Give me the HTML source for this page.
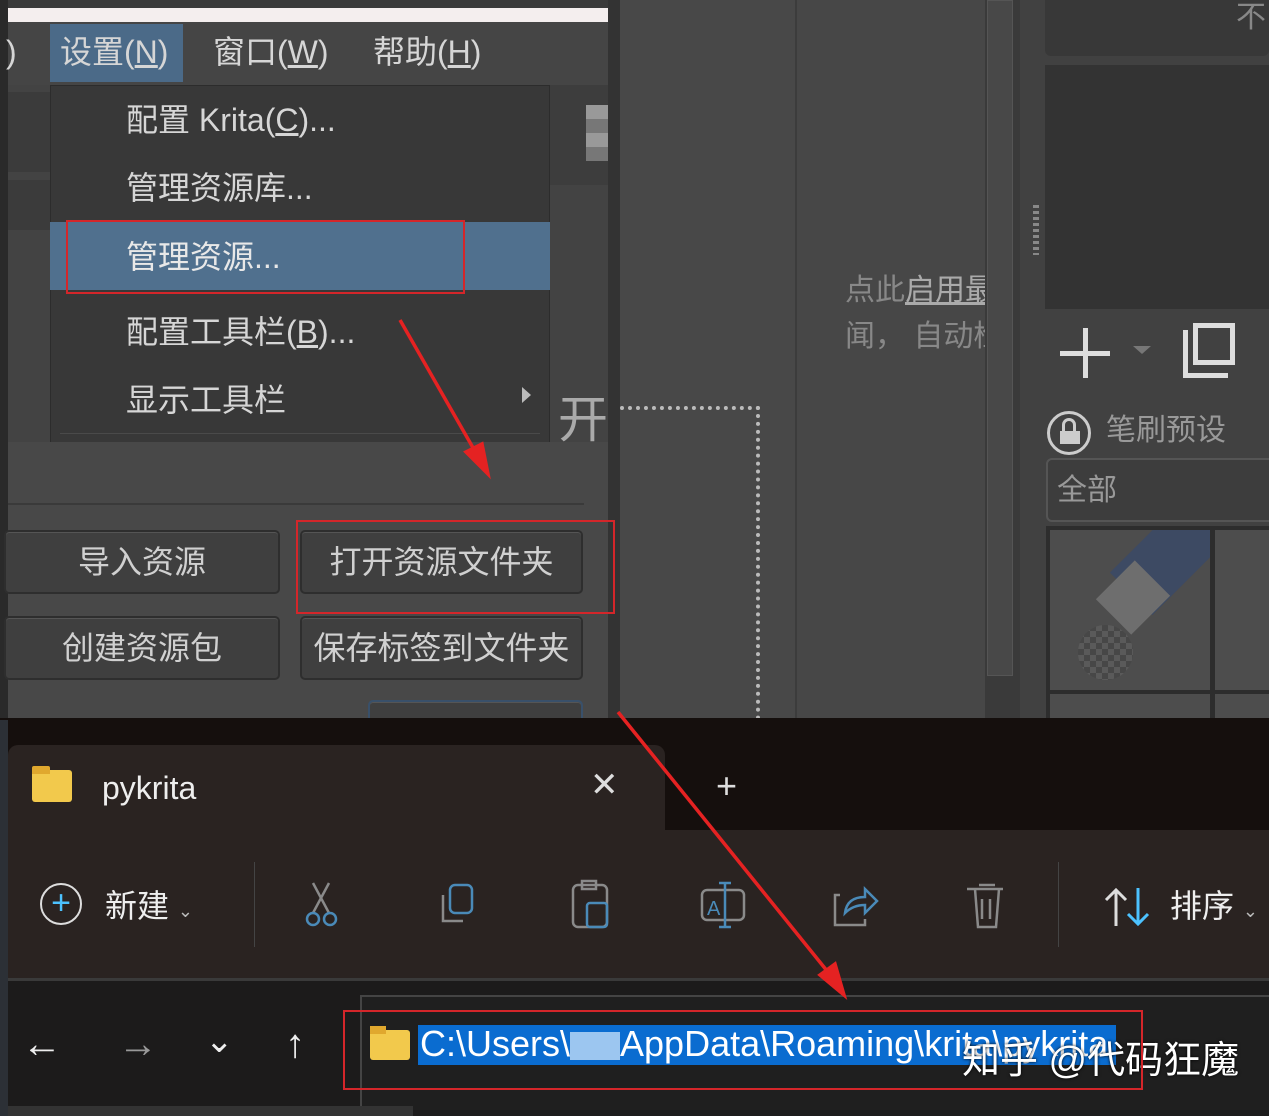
<!DOCTYPE html><html><head><meta charset="utf-8"><style>
*{margin:0;padding:0;box-sizing:border-box}
body{width:1269px;height:1116px;overflow:hidden;background:#2e2e2e;position:relative;font-family:"Liberation Sans","Noto Sans CJK SC",sans-serif}
.a{position:absolute}
.t{position:absolute;white-space:nowrap;color:#d6d6d6;font-size:32px;line-height:1}
.btn{position:absolute;background:#3f3f3f;border:2px solid #2e2e2e;border-radius:5px;color:#d0d0d0;font-size:32px;text-align:center;box-shadow:inset 0 1px 0 #555}
</style></head><body>
<div class="a" style="left:0;top:0;width:8px;height:720px;background:#2a2a2a"></div>
<div class="a" style="top:0;left:8px;width:600px;height:8px;background:#3a3a3a"></div>
<div class="a" style="left:8px;top:8px;width:600px;height:14px;background:#f4eeee"></div>
<div class="a" style="left:8px;top:22px;width:600px;height:63px;background:#454545"></div>
<div class="a" style="left:50px;top:24px;width:133px;height:58px;background:#4b6a88"></div>
<div class="t" style="left:6px;top:36px">)</div>
<div class="t" style="left:60px;top:36px">设置(<u>N</u>)</div>
<div class="t" style="left:213px;top:36px">窗口(<u>W</u>)</div>
<div class="t" style="left:373px;top:36px">帮助(<u>H</u>)</div>
<div class="a" style="left:8px;top:85px;width:600px;height:360px;background:#434343"></div>
<div class="a" style="left:8px;top:92px;width:42px;height:80px;background:#3b3b3b"></div>
<div class="a" style="left:8px;top:180px;width:42px;height:50px;background:#3b3b3b"></div>
<div class="a" style="left:550px;top:85px;width:58px;height:100px;background:#3d3d3d"></div>
<div class="a" style="left:586px;top:105px;width:22px;height:56px;background:repeating-linear-gradient(#999 0 14px,#777 14px 28px)"></div>
<div class="a" style="left:50px;top:85px;width:500px;height:358px;background:#383838;border:1px solid #2c2c2c"></div>
<div class="a" style="left:50px;top:222px;width:500px;height:68px;background:#50708e"></div>
<div class="t" style="left:126px;top:104px">配置 Krita(<u>C</u>)...</div>
<div class="t" style="left:126px;top:172px">管理资源库...</div>
<div class="t" style="left:126px;top:241px;color:#e8e8e8">管理资源...</div>
<div class="t" style="left:126px;top:316px">配置工具栏(<u>B</u>)...</div>
<div class="t" style="left:126px;top:384px">显示工具栏</div>
<div class="a" style="left:522px;top:387px;border-left:9px solid #bbb;border-top:8px solid transparent;border-bottom:8px solid transparent"></div>
<div class="a" style="left:60px;top:433px;width:480px;height:1px;background:#4a4a4a"></div>
<div class="t" style="left:558px;top:395px;font-size:50px;color:#aaa">开</div>
<div class="a" style="left:8px;top:442px;width:600px;height:278px;background:#484848"></div>
<div class="a" style="left:8px;top:503px;width:576px;height:2px;background:#3a3a3a"></div>
<div class="btn" style="left:4px;top:530px;width:276px;height:64px;line-height:60px">导入资源</div>
<div class="btn" style="left:300px;top:530px;width:283px;height:64px;line-height:60px">打开资源文件夹</div>
<div class="btn" style="left:4px;top:616px;width:276px;height:64px;line-height:60px">创建资源包</div>
<div class="btn" style="left:300px;top:616px;width:283px;height:64px;line-height:60px">保存标签到文件夹</div>
<div class="btn" style="left:368px;top:700px;width:215px;height:40px;border-color:#39506a"></div>
<div class="a" style="left:608px;top:0;width:12px;height:720px;background:#333"></div>
<div class="a" style="left:620px;top:0;width:175px;height:720px;background:#484848"></div>
<div class="a" style="left:795px;top:0;width:2px;height:720px;background:#3c3c3c"></div>
<div class="a" style="left:797px;top:0;width:188px;height:720px;background:#474747;overflow:hidden">
<div class="t" style="left:48px;top:276px;font-size:30px;color:#888">点此<u style="color:#aaa">启用最</u></div>
<div class="t" style="left:48px;top:322px;font-size:30px;color:#888">闻，&nbsp;自动检</div>
</div>
<div class="a" style="left:620px;top:406px;width:140px;height:314px;border-top:4px dotted #bbb;border-right:4px dotted #bbb"></div>
<div class="a" style="left:985px;top:0;width:35px;height:720px;background:#3a3a3a"></div>
<div class="a" style="left:987px;top:0;width:26px;height:676px;background:#484848;border:1px solid #555"></div>
<div class="a" style="left:1020px;top:0;width:249px;height:720px;background:#414141"></div>
<div class="a" style="left:1045px;top:0;width:224px;height:56px;background:#383838;border-radius:0 0 6px 6px"></div>
<div class="t" style="left:1236px;top:3px;font-size:30px;color:#888">不</div>
<div class="a" style="left:1045px;top:65px;width:224px;height:244px;background:#333"></div>
<div class="a" style="left:1033px;top:205px;width:6px;height:50px;background:repeating-linear-gradient(#888 0 3px,transparent 3px 6px)"></div>
<div class="a" style="left:1060px;top:351px;width:50px;height:5px;background:#ddd"></div>
<div class="a" style="left:1083px;top:328px;width:5px;height:50px;background:#ddd"></div>
<div class="a" style="left:1133px;top:346px;border-top:8px solid #777;border-left:9px solid transparent;border-right:9px solid transparent"></div>
<div class="a" style="left:1183px;top:330px;width:45px;height:48px;border-left:5px solid #ddd;border-bottom:5px solid #ddd"></div>
<div class="a" style="left:1193px;top:323px;width:42px;height:42px;border:5px solid #ddd"></div>
<div class="a" style="left:1047px;top:411px;width:44px;height:44px;border:3px solid #ccc;border-radius:50%"></div>
<div class="a" style="left:1060px;top:431px;width:20px;height:13px;background:#ccc"></div>
<div class="a" style="left:1062px;top:418px;width:14px;height:16px;border:3px solid #ccc;border-bottom:none;border-radius:7px 7px 0 0"></div>
<div class="t" style="left:1106px;top:416px;font-size:30px;color:#999">笔刷预设</div>
<div class="a" style="left:1046px;top:458px;width:230px;height:64px;background:#3d3d3d;border:2px solid #555;border-radius:6px"></div>
<div class="t" style="left:1057px;top:476px;font-size:30px;color:#999">全部</div>
<div class="a" style="left:1046px;top:526px;width:223px;height:194px;background:#2d2d2d"></div>
<div class="a" style="left:1050px;top:530px;width:160px;height:160px;background:#4d4d4d;overflow:hidden">
<div class="a" style="left:90px;top:-30px;width:60px;height:110px;background:#3d4a63;transform:rotate(45deg)"></div>
<div class="a" style="left:58px;top:40px;width:50px;height:55px;background:#6e6e6e;transform:rotate(45deg)"></div>
<div class="a" style="left:28px;top:95px;width:55px;height:55px;border-radius:50%;background:repeating-conic-gradient(#5a5a5a 0 25%,#474747 0 50%) 0 0/12px 12px"></div>
</div>
<div class="a" style="left:1215px;top:530px;width:54px;height:160px;background:#4d4d4d"></div>
<div class="a" style="left:1050px;top:694px;width:160px;height:30px;background:#4d4d4d"></div>
<div class="a" style="left:1215px;top:694px;width:54px;height:30px;background:#4d4d4d"></div>
<div class="a" style="left:66px;top:220px;width:399px;height:74px;border:2px solid #d4262a"></div>
<div class="a" style="left:296px;top:520px;width:319px;height:94px;border:2px solid #d4262a"></div>
<div class="a" style="left:0;top:718px;width:1269px;height:398px;background:#150f0d"></div>
<div class="a" style="left:0;top:720px;width:8px;height:396px;background:#2c3036"></div>
<div class="a" style="left:8px;top:745px;width:657px;height:100px;background:#2a2321;border-radius:10px 10px 0 0"></div>
<div class="a" style="left:8px;top:830px;width:1261px;height:150px;background:#2a2321"></div>
<div class="a" style="left:32px;top:770px;width:40px;height:32px;background:#f2c94c;border-radius:3px"></div>
<div class="a" style="left:32px;top:766px;width:18px;height:8px;background:#e0a82e;border-radius:2px 2px 0 0"></div>
<div class="t" style="left:102px;top:772px;color:#eee;font-size:32px">pykrita</div>
<div class="t" style="left:590px;top:768px;color:#ddd;font-size:34px">✕</div>
<div class="t" style="left:716px;top:768px;color:#ddd;font-size:36px">+</div>
<div class="a" style="left:40px;top:883px;width:42px;height:42px;border:2px solid #ddd;border-radius:50%;color:#4cc2ff;font-size:34px;line-height:36px;text-align:center">+</div>
<div class="t" style="left:105px;top:890px;color:#eee;font-size:32px">新建 <span style="font-size:18px;color:#bbb">⌄</span></div>
<div class="a" style="left:254px;top:862px;width:1px;height:85px;background:#444"></div>
<div class="a" style="left:1058px;top:862px;width:1px;height:85px;background:#444"></div>
<svg class="a" style="left:295px;top:875px" width="720" height="60" fill="none" stroke-width="2.5">
<g stroke="#8a8a8a"><path d="M18 8 L34 38 M34 8 L18 38"/></g><circle cx="18" cy="44" r="6" stroke="#4a8ab8"/><circle cx="35" cy="44" r="6" stroke="#4a8ab8"/>
<rect x="155" y="10" width="22" height="28" rx="5" stroke="#4a8ab8"/><path d="M148 20 v26 h20" stroke="#8a8a8a"/>
<rect x="278" y="10" width="34" height="42" rx="5" stroke="#8a8a8a"/><rect x="292" y="28" width="20" height="24" rx="3" stroke="#4a8ab8"/><rect x="287" y="6" width="14" height="8" stroke="#8a8a8a"/>
<rect x="407" y="15" width="42" height="30" rx="5" stroke="#8a8a8a"/><path d="M430 8 v44 M424 8h12 M424 52h12" stroke="#4a8ab8"/><text x="412" y="40" fill="#4a8ab8" stroke="none" font-size="20" font-family="Liberation Sans">A</text>
<path d="M545 20 h-5 v30 h30 v-6" stroke="#8a8a8a"/><path d="M550 38 q2-16 20-16 v-8 l12 12 -12 12 v-8 q-12 0 -20 8z" stroke="#4a8ab8"/>
<path d="M672 14 h36 M680 14 l3 38 h18 l3-38 M684 10 h16 M687 24 v20 M695 24 v20" stroke="#8a8a8a"/>
</svg>
<svg class="a" style="left:1104px;top:884px" width="50" height="46" fill="none" stroke-width="3">
<path d="M12 42 V6 M2 16 L12 6 L22 16" stroke="#ddd"/><path d="M34 4 V40 M24 30 L34 40 L44 30" stroke="#4cc2ff"/></svg>
<div class="t" style="left:1170px;top:890px;color:#eee;font-size:32px">排序 <span style="font-size:18px;color:#bbb">⌄</span></div>
<div class="a" style="left:8px;top:978px;width:1261px;height:3px;background:#3a3a3a"></div>
<div class="a" style="left:8px;top:981px;width:1261px;height:135px;background:#1c1b1b"></div>
<div class="a" style="left:360px;top:995px;width:909px;height:115px;background:#1f1f1f;border-top:2px solid #444;border-left:2px solid #444"></div>
<div class="t" style="left:22px;top:1024px;color:#eee;font-size:40px">←</div>
<div class="t" style="left:118px;top:1024px;color:#999;font-size:40px">→</div>
<div class="t" style="left:205px;top:1024px;color:#eee;font-size:34px">⌄</div>
<div class="t" style="left:285px;top:1024px;color:#eee;font-size:40px">↑</div>
<div class="a" style="left:370px;top:1030px;width:40px;height:30px;background:#f2c94c;border-radius:3px"></div>
<div class="a" style="left:370px;top:1026px;width:16px;height:8px;background:#e0a82e"></div>
<div class="a" style="left:418px;top:1025px;width:698px;height:40px;background:#0a6cd0"></div>
<div class="t" style="left:420px;top:1026px;color:#fff;font-size:36px;letter-spacing:0">C:\Users\<span style="display:inline-block;width:50px;height:28px;background:#9cc6f0;vertical-align:middle"></span>AppData\Roaming\krita\pykrita</div>
<div class="t" style="left:962px;top:1042px;color:#fff;font-size:38px;text-shadow:0 0 3px #000">知乎 @代码狂魔</div>
<div class="a" style="left:343px;top:1010px;width:800px;height:80px;border:2px solid #d4262a"></div>
<div class="a" style="left:8px;top:1106px;width:405px;height:10px;background:#333"></div>
<svg class="a" style="left:0;top:0" width="1269" height="1116"><g stroke="#e52222" stroke-width="3.5" fill="#e52222">
<path d="M400 320 L480 460"/><path d="M488 474 L466 452 L482 444Z"/>
<path d="M618 712 L836 982"/><path d="M844 995 L820 975 L835 964Z"/></g></svg>
</body></html>
